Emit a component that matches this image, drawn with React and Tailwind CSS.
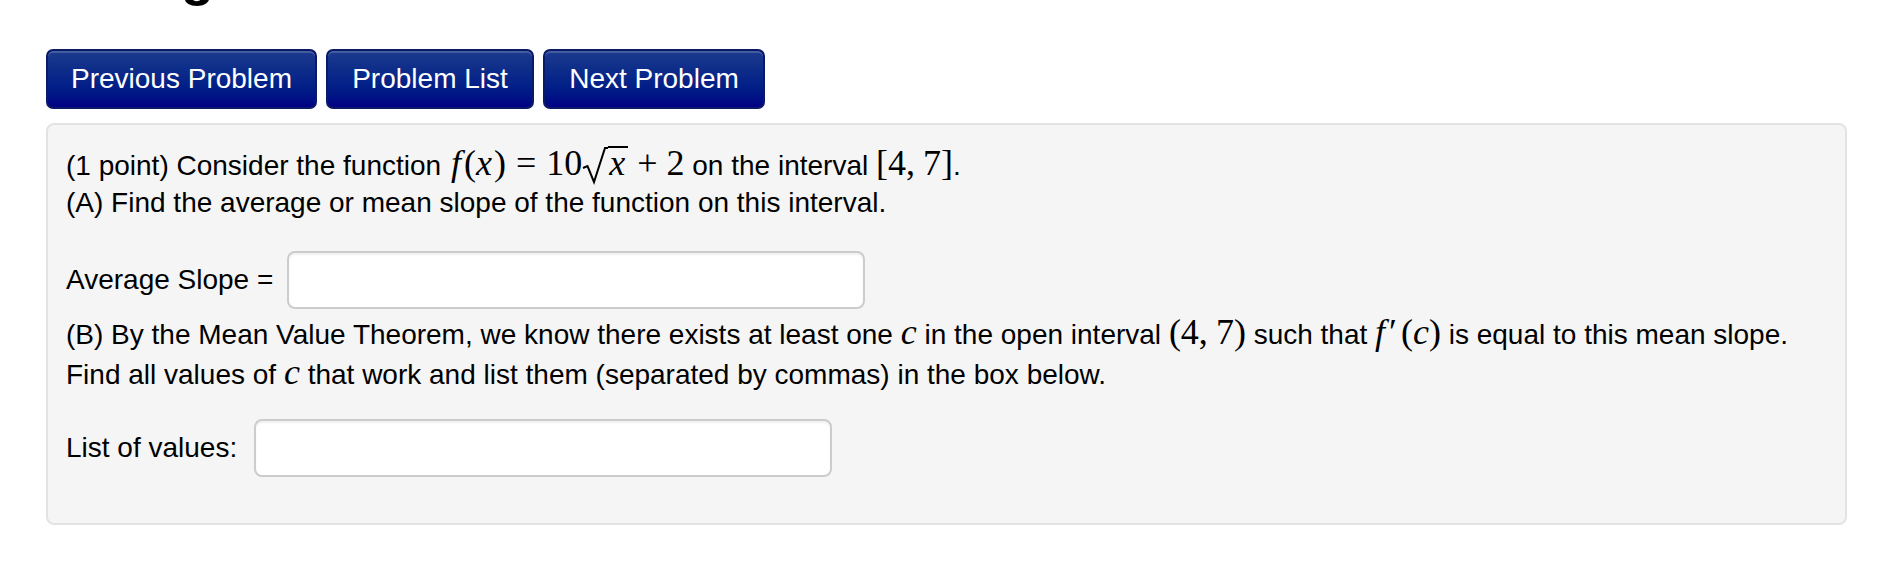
import React from 'react'

const serif = "font-['Liberation_Serif','Times_New_Roman',serif]"

function Var({ children, className = '' }) {
  return <span className={`${serif} italic text-[36px] leading-[40px] ${className}`}>{children}</span>
}

function Num({ children, className = '' }) {
  return <span className={`${serif} text-[36px] leading-[40px] ${className}`}>{children}</span>
}

function Sqrt({ children }) {
  return (
    <span className="whitespace-nowrap">
      <svg width="26" height="40" viewBox="0 0 26 40" className="inline-block align-[-11px]">
        <path d="M1 22 L5.5 20 L12 36 L23 2 L26 2" fill="none" stroke="black" strokeWidth="2" />
      </svg>
      <span className="inline-block border-t-2 border-black leading-[30px] pl-[1px] pr-[3px]">
        <Var className="!leading-[30px]">{children}</Var>
      </span>
    </span>
  )
}

function NavButton({ children, width }) {
  return (
    <button className={`h-[60px] ${width} rounded-[7px] border-2 border-[#0b1a66] bg-gradient-to-b from-[#1c3a8c] to-[#000084] text-white text-[28px] leading-[40px] shadow-[inset_0_2px_0_rgba(255,255,255,0.18)]`}>
      {children}
    </button>
  )
}

function AnswerBox({ width }) {
  return (
    <input
      type="text"
      className={`h-[58px] ${width} bg-white border-2 border-[#cccccc] rounded-[8px] shadow-[inset_0_2px_2px_rgba(0,0,0,0.06)] outline-none`}
    />
  )
}

export default function App() {
  return (
    <div className="min-h-screen bg-white text-black font-['Liberation_Sans',Arial,Helvetica,sans-serif]">
      <div className="pl-[46px] pr-[47px]">
        {/* page heading, scrolled mostly out of view */}
        <div className="h-[10px] overflow-hidden flex items-end">
          <h1 className="text-[54px] font-bold leading-[1.25] whitespace-nowrap">Change</h1>
        </div>

        <div className="mt-[39px] flex gap-[9px]">
          <NavButton width="w-[271px]">Previous Problem</NavButton>
          <NavButton width="w-[208px]">Problem List</NavButton>
          <NavButton width="w-[222px]">Next Problem</NavButton>
        </div>

        <div className="mt-[14px] bg-[#f5f5f5] border-2 border-[#e3e3e3] rounded-[8px] pt-[18px] pb-[46px] pl-[18px] pr-[18px] text-[28px] leading-[40px]">
          <p className="h-[40px] whitespace-pre">
            <span>(1 point) Consider the function </span>
            <Var className="ml-[2px] mr-[3px]">f</Var>
            <Num>(</Num>
            <Var className="mr-[2px]">x</Var>
            <Num>)</Num>
            <Num className="mx-[10px]">=</Num>
            <Num>10</Num>
            <Sqrt>x</Sqrt>
            <Num className="mx-[9px]">+</Num>
            <Num>2</Num>
            <span> on the interval </span>
            <Num>[4,</Num>
            <Num className="ml-[8px]">7]</Num>
            <span>.</span>
          </p>
          <p>(A) Find the average or mean slope of the function on this interval.</p>

          <div className="mt-[28px] flex items-center">
            <span>Average Slope =</span>
            <span className="ml-[14px]">
              <AnswerBox width="w-[578px]" />
            </span>
          </div>

          <p className="mt-[3px] h-[40px] whitespace-pre">
            <span>(B) By the Mean Value Theorem, we know there exists at least one </span>
            <Var>c</Var>
            <span> in the open interval </span>
            <Num>(4,</Num>
            <Num className="ml-[8px]">7)</Num>
            <span> such that </span>
            <Var className="mr-[4px]">f</Var>
            <Num className="mr-[4px]">′</Num>
            <Num>(</Num>
            <Var>c</Var>
            <Num>)</Num>
            <span> is equal to this mean slope.</span>
          </p>
          <p className="h-[40px] whitespace-pre">
            <span>Find all values of </span>
            <Var>c</Var>
            <span> that work and list them (separated by commas) in the box below.</span>
          </p>

          <div className="mt-[27px] flex items-center">
            <span>List of values:</span>
            <span className="ml-[17px]">
              <AnswerBox width="w-[578px]" />
            </span>
          </div>
        </div>
      </div>
    </div>
  )
}
